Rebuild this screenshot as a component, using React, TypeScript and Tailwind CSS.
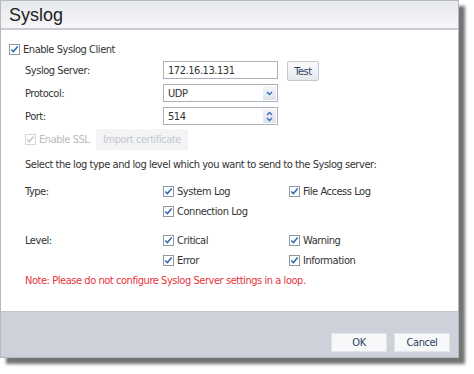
import React from "react";

const font = { fontFamily: '"DejaVu Sans Condensed", "Liberation Sans", sans-serif' };

function Check({ disabled = false }: { disabled?: boolean }) {
  const stroke = disabled ? "#c3c8cf" : "#2f66b3";
  const border = disabled ? "#d3d6da" : "#8e99a6";
  return (
    <svg width="11" height="11" viewBox="0 0 11 11" className="shrink-0">
      <rect x="0.5" y="0.5" width="10" height="10" fill="#fff" stroke={border} />
      <path d="M2.3 5.4 L4.4 7.6 L8.7 2.6" fill="none" stroke={stroke} strokeWidth="1.5" />
    </svg>
  );
}

function CheckItem({ label, disabled = false }: { label: string; disabled?: boolean }) {
  return (
    <div className="flex items-center gap-[3px]">
      <Check disabled={disabled} />
      <span className={disabled ? "text-[#b8bcc2]" : "text-[#333]"}>{label}</span>
    </div>
  );
}

function Row({ label, children, className = "" }: { label: string; children: React.ReactNode; className?: string }) {
  return (
    <div className={`flex items-center h-[18px] pl-[16px] ${className}`}>
      <div className="w-[138px] text-[#333]">{label}</div>
      {children}
    </div>
  );
}

function Btn({ children, className = "" }: { children: React.ReactNode; className?: string }) {
  return (
    <div
      className={`flex items-center justify-center border border-[#c3c7cf] rounded-[2px] bg-gradient-to-b from-[#fbfbfc] to-[#e6e8ec] text-[#2b3f63] ${className}`}
    >
      {children}
    </div>
  );
}

export default function App() {
  return (
    <div className="w-[474px] h-[374px] bg-white text-[11px] leading-none tracking-[-0.45px]" style={font}>
      <div className="w-[459px] h-[358px] border border-[#b5b9c1] shadow-[6px_6px_3px_rgba(0,0,0,0.55)] flex flex-col bg-white">
        <div className="h-[29px] shrink-0 bg-gradient-to-b from-[#e7e8ec] to-[#f5f6f8] border-b-2 border-[#c9cbd0] flex items-center pl-[8px]">
          <span className="text-[18px] tracking-normal text-[#222]" style={{ fontFamily: '"Liberation Sans", sans-serif' }}>
            Syslog
          </span>
        </div>

        <div className="flex-1 pl-[8px] pt-[10px] bg-white">
          <div className="h-[18px] flex items-center">
            <CheckItem label="Enable Syslog Client" />
          </div>

          <Row label="Syslog Server:" className="mt-[3px]">
            <div className="w-[115px] h-[18px] border border-[#abb1ba] flex items-center px-[4px] text-[#333]">172.16.13.131</div>
            <Btn className="ml-[9px] w-[32px] h-[20px] mt-[2px]">Test</Btn>
          </Row>

          <Row label="Protocol:" className="mt-[5px]">
            <div className="w-[115px] h-[18px] border border-[#abb1ba] flex items-center">
              <span className="flex-1 px-[4px] text-[#333]">UDP</span>
              <div className="w-[13px] h-[14px] mr-[1px] bg-gradient-to-b from-[#f4f6f9] to-[#dde2ea] flex items-center justify-center">
                <svg width="7" height="5" viewBox="0 0 7 5">
                  <path d="M1 1 L3.5 3.5 L6 1" fill="none" stroke="#3a6fc0" strokeWidth="1.4" />
                </svg>
              </div>
            </div>
          </Row>

          <Row label="Port:" className="mt-[5px]">
            <div className="w-[115px] h-[18px] border border-[#abb1ba] flex items-center">
              <span className="flex-1 px-[4px] text-[#333]">514</span>
              <div className="w-[13px] h-[14px] mr-[1px] bg-gradient-to-b from-[#f4f6f9] to-[#dde2ea] flex flex-col items-center justify-center gap-[1px]">
                <svg width="7" height="5" viewBox="0 0 7 5">
                  <path d="M1 4 L3.5 1.5 L6 4" fill="none" stroke="#3a6fc0" strokeWidth="1.4" />
                </svg>
                <svg width="7" height="5" viewBox="0 0 7 5">
                  <path d="M1 1 L3.5 3.5 L6 1" fill="none" stroke="#3a6fc0" strokeWidth="1.4" />
                </svg>
              </div>
            </div>
          </Row>

          <div className="mt-[4px] h-[21px] flex items-center pl-[16px]">
            <div className="w-[71px]">
              <CheckItem label="Enable SSL" disabled />
            </div>
            <div className="w-[92px] h-[21px] bg-[#f3f4f6] flex items-center justify-center text-[#c5c8cd]">
              Import certificate
            </div>
          </div>

          <div className="mt-[5px] h-[18px] flex items-center pl-[16px] text-[#333]">
            Select the log type and log level which you want to send to the Syslog server:
          </div>

          <Row label="Type:" className="mt-[9px]">
            <div className="w-[126px]">
              <CheckItem label="System Log" />
            </div>
            <CheckItem label="File Access Log" />
          </Row>
          <Row label="" className="mt-[2px]">
            <CheckItem label="Connection Log" />
          </Row>

          <Row label="Level:" className="mt-[11px]">
            <div className="w-[126px]">
              <CheckItem label="Critical" />
            </div>
            <CheckItem label="Warning" />
          </Row>
          <Row label="" className="mt-[2px]">
            <div className="w-[126px]">
              <CheckItem label="Error" />
            </div>
            <CheckItem label="Information" />
          </Row>

          <div className="mt-[2px] h-[18px] flex items-center pl-[16px] text-[#e8323c]">
            Note: Please do not configure Syslog Server settings in a loop.
          </div>
        </div>

        <div className="h-[46px] shrink-0 bg-[#ced1d9] border-t border-[#c3c6cd] flex items-end justify-end gap-[7px] pr-[8px] pb-[5px]">
          <div className="w-[56px] h-[19px] bg-[#f7f8fa] border border-[#e2e4e8] flex items-center justify-center text-[#2b3f63]">OK</div>
          <div className="w-[56px] h-[19px] bg-[#f7f8fa] border border-[#e2e4e8] flex items-center justify-center text-[#2b3f63]">Cancel</div>
        </div>
      </div>
    </div>
  );
}
